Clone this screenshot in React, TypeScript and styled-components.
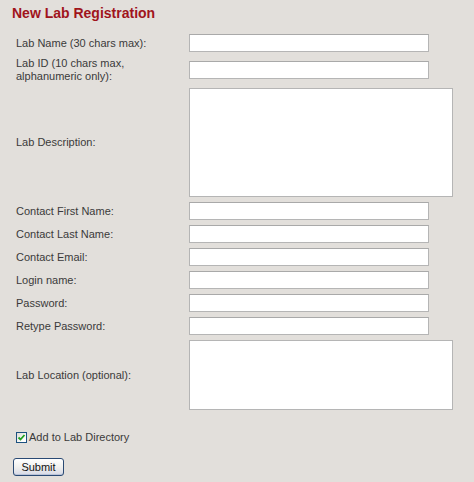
import React from 'react'
import styled, { createGlobalStyle } from 'styled-components'

const GlobalStyle = createGlobalStyle`
  html, body {
    margin: 0;
    padding: 0;
    background: #e2dfdb;
  }
  body {
    font-family: "Liberation Sans", Arial, sans-serif;
    color: #333;
  }
`

const Page = styled.div`
  width: 474px;
  height: 482px;
  box-sizing: border-box;
  padding: 4px 0 0 12px;
  background: #e2dfdb;
`

const Title = styled.h2`
  margin: 0;
  font-size: 14px;
  line-height: 18px;
  font-weight: bold;
  color: #a0141b;
`

const Form = styled.div`
  display: grid;
  grid-template-columns: 173px auto;
  row-gap: 5px;
  align-items: center;
  margin: 12px 0 0 4px;
`

const Label = styled.label`
  font-size: 11px;
  line-height: 13px;
  color: #3a3a3a;
  white-space: nowrap;
`

const TextInput = styled.input`
  box-sizing: border-box;
  width: 240px;
  height: 18px;
  margin: 0;
  border: 1px solid #b5b5b5;
  border-top-color: #a9a9a9;
  background: #fff;
  outline: none;
`

const TextArea = styled.textarea<{ $h: number }>`
  box-sizing: border-box;
  width: 264px;
  height: ${(p) => p.$h}px;
  margin: 0;
  border: 1px solid #b5b5b5;
  background: #fff;
  resize: none;
  outline: none;
`

const CheckRow = styled.label`
  display: flex;
  align-items: center;
  gap: 2px;
  margin: 21px 0 0 4px;
  font-size: 11px;
  color: #3a3a3a;
`

const Box = styled.span`
  display: inline-flex;
  align-items: center;
  justify-content: center;
  box-sizing: border-box;
  width: 11px;
  height: 11px;
  border: 1px solid #1c5180;
  background: linear-gradient(135deg, #dcdcd6 0%, #fff 80%);
`

const Button = styled.button`
  display: block;
  margin: 15px 0 0 1px;
  width: 51px;
  height: 18px;
  padding: 0;
  font-family: "Liberation Sans", Arial, sans-serif;
  font-size: 11px;
  color: #111;
  border: 1px solid #2a4a74;
  border-radius: 3px;
  background: linear-gradient(#ffffff 0%, #f0f0ee 50%, #d6d9e6 100%);
  box-shadow: inset 0 -1px 0 #b9c3d8;
`

type Field = { label: React.ReactNode; kind: 'input' | 'area'; h?: number }

const fields: Field[] = [
  { label: 'Lab Name (30 chars max):', kind: 'input' },
  { label: <>Lab ID (10 chars max,<br />alphanumeric only):</>, kind: 'input' },
  { label: 'Lab Description:', kind: 'area', h: 109 },
  { label: 'Contact First Name:', kind: 'input' },
  { label: 'Contact Last Name:', kind: 'input' },
  { label: 'Contact Email:', kind: 'input' },
  { label: 'Login name:', kind: 'input' },
  { label: 'Password:', kind: 'input' },
  { label: 'Retype Password:', kind: 'input' },
  { label: 'Lab Location (optional):', kind: 'area', h: 70 },
]

const App = () => {
  return (
    <Page>
      <GlobalStyle />
      <Title>New Lab Registration</Title>

      <Form>
        {fields.map((f, i) => (
          <React.Fragment key={i}>
            <Label>{f.label}</Label>
            {f.kind === 'input'
              ? <TextInput type="text" />
              : <TextArea $h={f.h || 60} />}
          </React.Fragment>
        ))}
      </Form>

      <CheckRow>
        <Box>
          <svg width="9" height="9" viewBox="0 0 9 9">
            <path d="M1.5 4.5 L3.5 6.5 L7.5 2" stroke="#21a121" strokeWidth="1.8" fill="none" />
          </svg>
        </Box>
        Add to Lab Directory
      </CheckRow>

      <Button>Submit</Button>
    </Page>
  )
}

export default App
